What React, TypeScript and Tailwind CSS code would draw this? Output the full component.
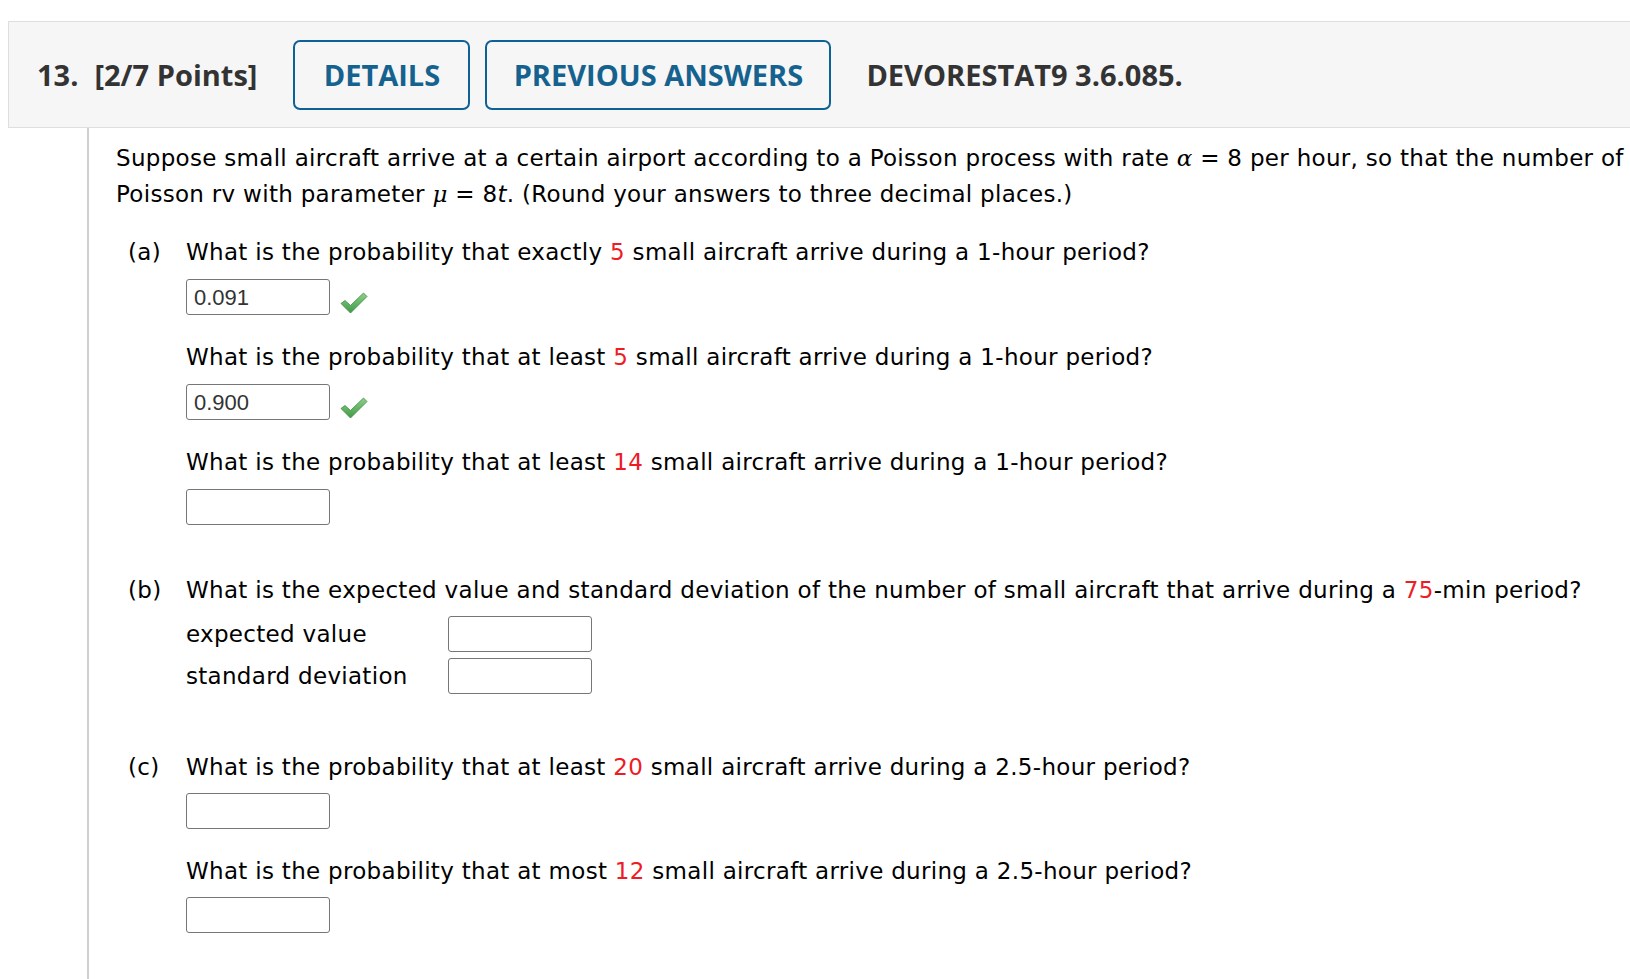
import React from 'react';

const body = '"DejaVu Sans", Verdana, sans-serif';

const Red: React.FC<{ children: React.ReactNode }> = ({ children }) => (
  <span className="text-[#ee1c25]">{children}</span>
);

const Check: React.FC = () => (
  <svg width="28" height="22" viewBox="0 0 28 22" className="ml-[10px] mt-[13px]">
    <defs>
      <linearGradient id="chk" x1="0" y1="0" x2="0" y2="1">
        <stop offset="0" stopColor="#8fd08a" />
        <stop offset="1" stopColor="#3f9a45" />
      </linearGradient>
    </defs>
    <path
      d="M1 11.5 L5 8.5 L10.5 13.5 L23.5 1 L27 4.5 L10.5 21 Z"
      fill="url(#chk)"
      stroke="#3a8a3f"
      strokeWidth="0.8"
      strokeLinejoin="round"
    />
  </svg>
);

const Box: React.FC<{ value?: string; checked?: boolean }> = ({ value, checked }) => (
  <div className="flex items-start">
    <div
      className="w-[144px] h-[36px] border border-[#767676] rounded-[3px] bg-white px-[7px] flex items-center text-[22px] tracking-normal text-[#333]"
      style={{ fontFamily: '"Liberation Sans", Arial, sans-serif' }}
    >
      {value}
    </div>
    {checked && <Check />}
  </div>
);

const App: React.FC = () => {
  return (
    <div className="w-[1630px] h-[979px] overflow-hidden bg-white">
      <div
        className="mt-[21px] ml-[8px] w-[1700px] h-[107px] border border-[#dedede] bg-[#f6f6f6] flex items-center text-[#333]"
        style={{ fontFamily: '"Open Sans", sans-serif' }}
      >
        <span className="ml-[28px] text-[29px] font-bold">13.</span>
        <span className="ml-[16px] text-[29px] font-bold">[2/7 Points]</span>
        <button className="ml-[36px] h-[70px] w-[177px] border-2 border-[#0d6197] rounded-[7px] text-[29px] font-bold text-[#16628f]">
          DETAILS
        </button>
        <button className="ml-[15px] h-[70px] w-[346px] border-2 border-[#0d6197] rounded-[7px] text-[29px] font-bold text-[#16628f]">
          PREVIOUS ANSWERS
        </button>
        <span className="ml-[35px] text-[29px] font-bold">DEVORESTAT9 3.6.085.</span>
      </div>

      <div
        className="ml-[87px] w-[1800px] h-[860px] border-l-2 border-[#d0d0d0] pl-[27px] pt-[12px] text-[23px] tracking-[0.3px] text-black whitespace-nowrap"
        style={{ fontFamily: body }}
      >
        <p className="leading-[36px]">
          Suppose small aircraft arrive at a certain airport according to a Poisson process with rate{' '}
          <i style={{ fontFamily: '"DejaVu Serif", serif' }}>α</i> = 8 per hour, so that the number of arrivals during a time period of{' '}
          <i>t</i> hours is a
          <br />
          Poisson rv with parameter <i style={{ fontFamily: '"DejaVu Serif", serif' }}>μ</i> = 8<i>t</i>. (Round your answers to three decimal places.)
        </p>

        <div className="flex mt-[22px]">
          <div className="w-[70px] pl-[12px] leading-[36px]">(a)</div>
          <div>
            <div className="leading-[36px]">
              What is the probability that exactly <Red>5</Red> small aircraft arrive during a 1-hour period?
            </div>
            <div className="mt-[9px]">
              <Box value="0.091" checked />
            </div>
            <div className="leading-[36px] mt-[24px]">
              What is the probability that at least <Red>5</Red> small aircraft arrive during a 1-hour period?
            </div>
            <div className="mt-[9px]">
              <Box value="0.900" checked />
            </div>
            <div className="leading-[36px] mt-[24px]">
              What is the probability that at least <Red>14</Red> small aircraft arrive during a 1-hour period?
            </div>
            <div className="mt-[9px]">
              <Box />
            </div>
          </div>
        </div>

        <div className="flex mt-[47px]">
          <div className="w-[70px] pl-[12px] leading-[36px]">(b)</div>
          <div>
            <div className="leading-[36px]">
              What is the expected value and standard deviation of the number of small aircraft that arrive during a{' '}
              <Red>75</Red>-min period?
            </div>
            <div className="flex items-center mt-[8px]">
              <div className="w-[262px]">expected value</div>
              <Box />
            </div>
            <div className="flex items-center mt-[6px]">
              <div className="w-[262px]">standard deviation</div>
              <Box />
            </div>
          </div>
        </div>

        <div className="flex mt-[55px]">
          <div className="w-[70px] pl-[12px] leading-[36px]">(c)</div>
          <div>
            <div className="leading-[36px]">
              What is the probability that at least <Red>20</Red> small aircraft arrive during a 2.5-hour period?
            </div>
            <div className="mt-[8px]">
              <Box />
            </div>
            <div className="leading-[36px] mt-[24px]">
              What is the probability that at most <Red>12</Red> small aircraft arrive during a 2.5-hour period?
            </div>
            <div className="mt-[8px]">
              <Box />
            </div>
          </div>
        </div>
      </div>
    </div>
  );
};

export default App;
